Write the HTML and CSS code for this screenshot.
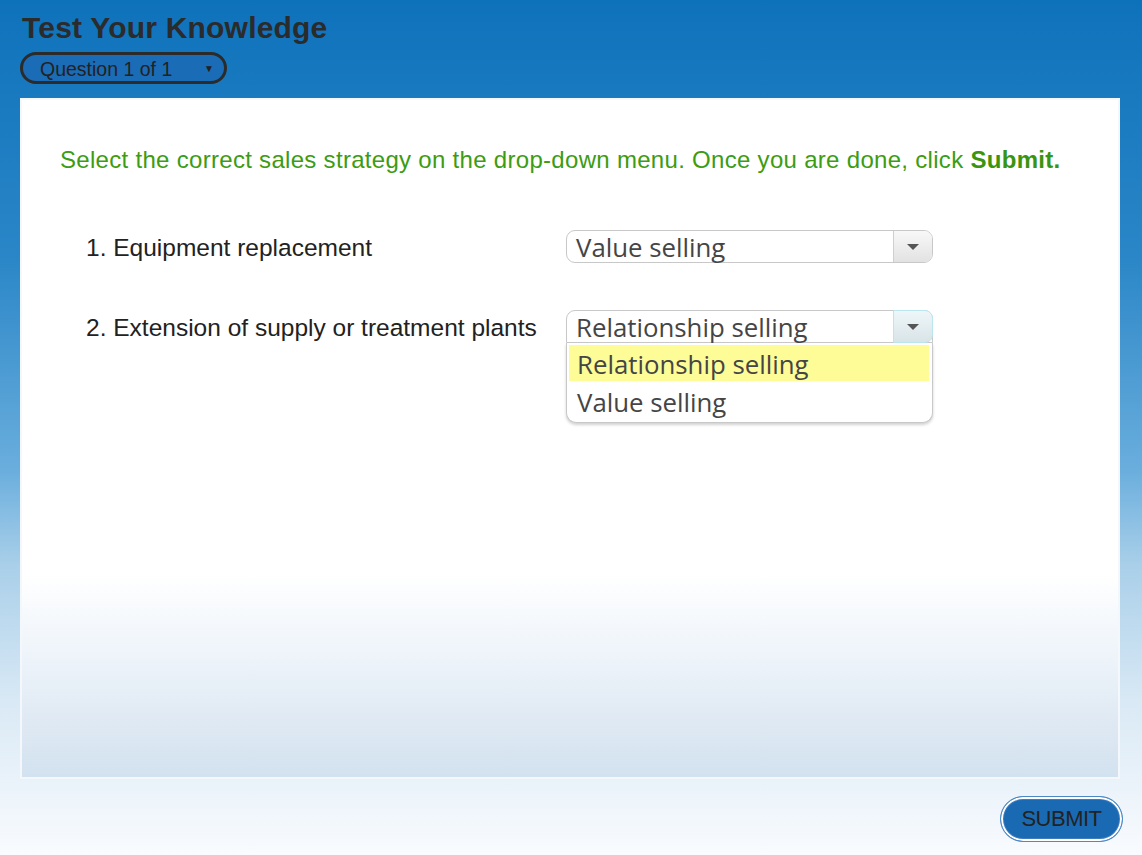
FILE: index.html
```html
<!DOCTYPE html>
<html lang="en">
<head>
    <meta charset="UTF-8">
    <meta name="viewport" content="width=device-width, initial-scale=1.0">
    <title>Test Your Knowledge</title>
    <link rel="stylesheet" href="styles.css">
</head>
<body>
    <div class="header">
        <h1 class="title">Test Your Knowledge</h1>
        <div class="question-pill">Question 1 of 1 <span class="pill-arrow">&#9660;</span></div>
    </div>
    <div class="panel">
        <p class="instructions">Select the correct sales strategy on the drop-down menu. Once you are done, click <b>Submit.</b></p>
        <div class="rows">
            <div class="row">
                <span class="label">1. Equipment replacement</span>
                <div class="select">
                    <span class="select-value">Value selling</span>
                    <span class="select-btn"><span class="tri"></span></span>
                </div>
            </div>
            <div class="row">
                <span class="label">2. Extension of supply or treatment plants</span>
                <div class="select open">
                    <span class="select-value">Relationship selling</span>
                    <span class="select-btn"><span class="tri"></span></span>
                    <div class="menu">
                        <div class="menu-item active">Relationship selling</div>
                        <div class="menu-item">Value selling</div>
                    </div>
                </div>
            </div>
        </div>
    </div>
    <div class="footer">
        <button class="submit">SUBMIT</button>
    </div>
</body>
</html>
```

FILE: styles.css
```css
html, body {
    height: 100%;
}
body {
    margin: 0;
    font-family: "Liberation Sans", Arial, sans-serif;
    background: linear-gradient(to bottom, #0e72bb 0%, #2a86c7 30%, #6aaedd 55%, #a9cfe9 66%, #d9e9f5 82%, #f9fbfe 100%);
    min-height: 855px;
}
.header {
    padding: 10px 0 0 20px;
    height: 88px;
    box-sizing: border-box;
}
.title {
    margin: 0 0 0 2px;
    font-size: 30px;
    font-weight: bold;
    color: #2b2b2b;
    line-height: 35px;
    letter-spacing: 0.2px;
}
.question-pill {
    margin-top: 7px;
    width: 201px;
    height: 26px;
    border: 3px solid #2b2b2b;
    border-radius: 16px;
    background: #1a6cb6;
    color: #222;
    font-size: 19.5px;
    line-height: 28px;
    text-indent: 17px;
    position: relative;
}
.pill-arrow {
    position: absolute;
    right: 10px;
    top: 0;
    font-size: 10px;
    text-indent: 0;
}
.panel {
    margin: 10px 0 0 20px;
    width: 1100px;
    height: 681px;
    box-sizing: border-box;
    border: 2px solid #f4f8fc;
    background: linear-gradient(to bottom, #ffffff 0%, #ffffff 70%, #eef4fa 82%, #dfe9f3 92%, #d2e2ef 100%);
    padding: 45px 0 0 38px;
}
.instructions {
    margin: 0;
    font-size: 24px;
    letter-spacing: 0.3px;
    color: #3c9c12;
    line-height: 30px;
}
.instructions b {
    color: #3a9410;
}
.rows {
    margin-top: 55px;
    padding-left: 26px;
    display: flex;
    flex-direction: column;
    gap: 47px;
}
.row {
    display: flex;
    align-items: center;
    height: 33px;
}
.label {
    width: 480px;
    padding-top: 2px;
    font-size: 24.5px;
    color: #222;
}
.select {
    position: relative;
    width: 367px;
    height: 33px;
    box-sizing: border-box;
    border: 1px solid #c8c8c8;
    border-radius: 9px;
    background: #fff;
    display: flex;
    font-family: "Open Sans", "Noto Sans", sans-serif;
}
.select-value {
    flex: 1;
    padding-left: 9px;
    font-size: 25.8px;
    line-height: 32px;
    color: #454545;
}
.select-btn {
    width: 38px;
    border-left: 1px solid #cfcfcf;
    border-radius: 0 8px 8px 0;
    background: linear-gradient(to bottom, #f8f8f8, #e2e2e2);
    display: flex;
    align-items: center;
    justify-content: center;
}
.tri {
    width: 0;
    height: 0;
    border-left: 6px solid transparent;
    border-right: 6px solid transparent;
    border-top: 6px solid #555;
}
.select.open {
    border-radius: 9px 9px 0 0;
}
.select.open .select-btn {
    border: 1px solid #b9e6ef;
    margin: -1px -1px -1px 0;
    background: linear-gradient(to bottom, #eef6f8, #d9e4e8);
}
.menu {
    position: absolute;
    left: -1px;
    right: -1px;
    top: 32px;
    height: 80px;
    box-sizing: border-box;
    border: 1px solid #c8c8c8;
    border-top: none;
    border-radius: 0 0 10px 10px;
    background: #fff;
    box-shadow: 0 2px 3px rgba(0, 0, 0, 0.18);
    padding: 2px 3px 0 2px;
}
.menu-item {
    height: 40px;
    line-height: 42px;
    padding-left: 8px;
    font-size: 25.8px;
    color: #454545;
}
.menu-item.active {
    height: 36px;
    line-height: 38px;
    background: #fdfc97;
}
.footer {
    display: flex;
    justify-content: flex-end;
    padding: 17px 19px 0 0;
}
.submit {
    width: 123px;
    height: 46px;
    border-radius: 23px;
    border: 1px solid #4b88c6;
    background: #1a6ab3;
    box-shadow: inset 0 0 0 2px #ffffff, inset 0 0 0 3px #3d7cbd;
    font-family: "Liberation Sans", Arial, sans-serif;
    font-size: 22px;
    color: #222;
    padding: 0;
    letter-spacing: -0.5px;
}
```
